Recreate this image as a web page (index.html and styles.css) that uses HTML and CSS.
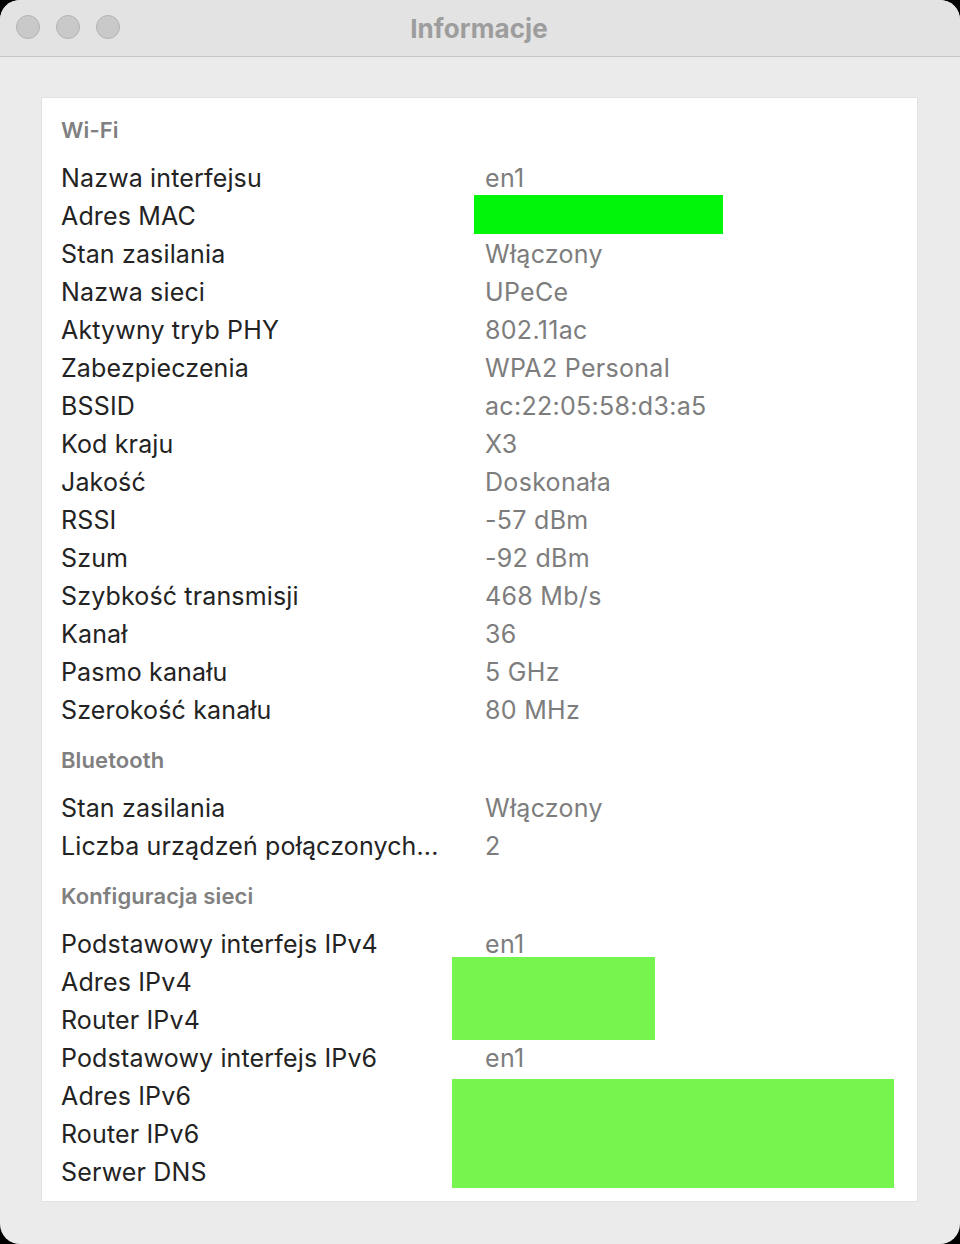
FILE: index.html
```html
<!DOCTYPE html>
<html lang="pl">
<head>
<meta charset="utf-8">
<title>Informacje</title>
<link rel="stylesheet" href="styles.css">
</head>
<body>
<div class="window">
  <div class="titlebar">
    <div class="lights">
      <span class="light"></span>
      <span class="light"></span>
      <span class="light"></span>
    </div>
    <div class="title">Informacje</div>
  </div>
  <div class="content">
    <div class="panel">
      <section class="section">
        <h2 class="section-title">Wi-Fi</h2>
        <div class="rows">
          <div class="label">Nazwa interfejsu</div><div class="value">en1</div>
          <div class="label">Adres MAC</div><div class="value"><span class="redact redact-mac"></span></div>
          <div class="label">Stan zasilania</div><div class="value">Włączony</div>
          <div class="label">Nazwa sieci</div><div class="value">UPeCe</div>
          <div class="label">Aktywny tryb PHY</div><div class="value">802.11ac</div>
          <div class="label">Zabezpieczenia</div><div class="value">WPA2 Personal</div>
          <div class="label">BSSID</div><div class="value">ac:22:05:58:d3:a5</div>
          <div class="label">Kod kraju</div><div class="value">X3</div>
          <div class="label">Jakość</div><div class="value">Doskonała</div>
          <div class="label">RSSI</div><div class="value">-57 dBm</div>
          <div class="label">Szum</div><div class="value">-92 dBm</div>
          <div class="label">Szybkość transmisji</div><div class="value">468 Mb/s</div>
          <div class="label">Kanał</div><div class="value">36</div>
          <div class="label">Pasmo kanału</div><div class="value">5 GHz</div>
          <div class="label">Szerokość kanału</div><div class="value">80 MHz</div>
        </div>
      </section>
      <section class="section">
        <h2 class="section-title">Bluetooth</h2>
        <div class="rows">
          <div class="label">Stan zasilania</div><div class="value">Włączony</div>
          <div class="label">Liczba urządzeń połączonych...</div><div class="value">2</div>
        </div>
      </section>
      <section class="section">
        <h2 class="section-title">Konfiguracja sieci</h2>
        <div class="rows">
          <div class="label">Podstawowy interfejs IPv4</div><div class="value">en1</div>
          <div class="label">Adres IPv4</div><div class="value"><span class="redact redact-ipv4"></span></div>
          <div class="label">Router IPv4</div><div class="value"></div>
          <div class="label">Podstawowy interfejs IPv6</div><div class="value">en1</div>
          <div class="label">Adres IPv6</div><div class="value"><span class="redact redact-ipv6"></span></div>
          <div class="label">Router IPv6</div><div class="value"></div>
          <div class="label">Serwer DNS</div><div class="value"></div>
        </div>
      </section>
    </div>
  </div>
</div>
</body>
</html>
```

FILE: styles.css
```css
html, body {
  margin: 0;
  padding: 0;
  background: #000;
}

.window {
  width: 960px;
  height: 1244px;
  border-radius: 20px;
  overflow: hidden;
  background: #ebebeb;
  display: flex;
  flex-direction: column;
  font-family: Inter, "Liberation Sans", sans-serif;
}

.titlebar {
  height: 56px;
  flex: 0 0 56px;
  background: #e3e3e3;
  border-bottom: 1px solid #c6c6c6;
  position: relative;
  display: flex;
  align-items: center;
  justify-content: center;
}

.lights {
  position: absolute;
  left: 16px;
  top: 15px;
  display: flex;
  gap: 16px;
}

.light {
  width: 22px;
  height: 22px;
  border-radius: 50%;
  background: #c9c9c9;
  border: 1px solid #b3b3b3;
}

.title {
  font-size: 26px;
  font-weight: 700;
  color: #9d9d9d;
  letter-spacing: 0.1px;
  margin-left: -2px;
}

.content {
  flex: 1;
  padding: 40px 42px 42px 41px;
  display: flex;
}

.panel {
  flex: 1;
  background: #fff;
  border: 1px solid #e2e2e2;
  padding: 13px 20px 10px 19px;
  display: flex;
  flex-direction: column;
}

.section + .section {
  margin-top: 12px;
}

.section-title {
  margin: 0 0 10px 0;
  height: 38px;
  line-height: 38px;
  font-size: 22px;
  font-weight: 600;
  letter-spacing: 0.1px;
  color: #808080;
}

.rows {
  display: grid;
  grid-template-columns: 424px 1fr;
  grid-auto-rows: 38px;
}

.label, .value {
  font-size: 25px;
  line-height: 38px;
  white-space: nowrap;
}

.label {
  color: #232323;
  letter-spacing: 0.15px;
}

.value {
  color: #7d7d7d;
  letter-spacing: 0.3px;
  position: relative;
}

.redact {
  position: absolute;
  display: block;
}

.redact-mac {
  left: -11px;
  top: -2px;
  width: 249px;
  height: 39px;
  background: #00f509;
}

.redact-ipv4 {
  left: -33px;
  top: -6px;
  width: 203px;
  height: 83px;
  background: #75f54d;
}

.redact-ipv6 {
  left: -33px;
  top: 2px;
  width: 442px;
  height: 109px;
  background: #75f54d;
}
```
